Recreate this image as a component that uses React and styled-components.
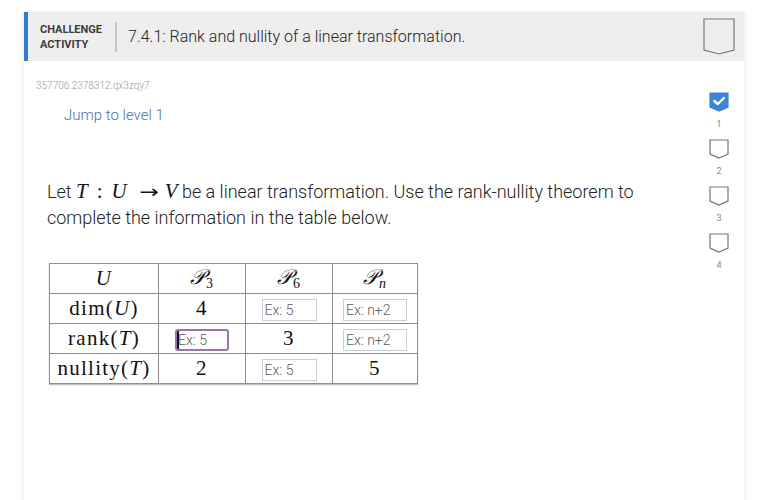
import React from 'react';
import styled, { createGlobalStyle } from 'styled-components';

const GlobalStyle = createGlobalStyle`
  body {
    margin: 0;
    background: #ffffff;
    font-family: Roboto, "Liberation Sans", sans-serif;
    color: #333333;
  }
`;

const Page = styled.div`
  padding: 12px 30px 0 24px;
`;

const Card = styled.section`
  width: 720px;
  min-height: 500px;
  background: #ffffff;
  box-shadow: 0 1px 4px rgba(0, 0, 0, 0.14);
`;

const Header = styled.header`
  display: flex;
  align-items: center;
  height: 49px;
  background: #eeeeee;
  border-left: 4px solid #2f80c9;
  padding: 0 9px 0 12px;
`;

const Kicker = styled.div`
  width: 75px;
  font-size: 11px;
  font-weight: 700;
  line-height: 15px;
  color: #3d3d3d;
  text-transform: uppercase;
`;

const Divider = styled.div`
  width: 2px;
  height: 30px;
  background: #c4c4c4;
  margin-right: 11px;
`;

const Title = styled.h1`
  flex: 1;
  margin: 0;
  font-size: 16px;
  font-weight: 300;
  color: #222222;
`;

const Body = styled.div`
  display: flex;
`;

const Main = styled.div`
  flex: 1;
  padding: 19px 0 0 12px;
  font-weight: 300;
`;

const ActivityId = styled.div`
  font-size: 10px;
  line-height: 12px;
  color: #9a9a9a;
`;

const JumpLink = styled.a`
  display: block;
  margin: 14px 0 0 28px;
  font-size: 15px;
  line-height: 18px;
  color: #3f72b5;
  text-decoration: none;
`;

const Prompt = styled.p`
  margin: 54px 0 0 11px;
  font-size: 18px;
  line-height: 26px;
  color: #222222;
  max-width: 596px;
`;

const Math = styled.span`
  display: inline-block;
  font-family: "Liberation Serif", "DejaVu Serif", serif;
  font-size: 21px;
  font-style: ${(p) => (p.italic ? 'italic' : 'normal')};
  font-weight: 400;
  margin: 0 ${(p) => p.gap || 0}px;
  color: #111111;
`;

const Arrow = styled.span`
  display: inline-block;
  width: 24px;
  text-align: center;
  font-family: "DejaVu Sans", sans-serif;
  font-size: 18px;
  font-weight: 400;
  margin: 0 4px 0 10px;
  transform: scaleX(1.3);
  color: #111111;
`;

const Table = styled.table`
  margin: 32px 0 0 13px;
  border-collapse: collapse;
  box-shadow: 0 1px 1px rgba(0, 0, 0, 0.25);
`;

const Cell = styled.td`
  width: ${(p) => p.w}px;
  height: 29px;
  padding: 0;
  border: 1px solid #8e8e8e;
  text-align: center;
  vertical-align: middle;
  font-family: "Liberation Serif", "DejaVu Serif", serif;
  font-size: 21px;
  font-weight: 400;
  letter-spacing: 0.06em;
  color: #111111;
`;

const Sub = styled.sub`
  font-size: 14px;
  vertical-align: -4px;
  font-style: ${(p) => (p.italic ? 'italic' : 'normal')};
`;

const Answer = styled.input`
  box-sizing: border-box;
  width: ${(p) => p.w}px;
  height: 22px;
  padding: 0 0 0 2px;
  border: 1px solid #c9d0d5;
  border-radius: 0;
  outline: none;
  font-family: Roboto, "Liberation Sans", sans-serif;
  font-size: 14px;
  font-weight: 300;
  letter-spacing: 0;
  vertical-align: middle;
  &::placeholder {
    color: #5f5f5f;
  }
`;

const ActiveAnswer = styled(Answer)`
  border: 2px solid #9d72aa;
  border-radius: 3px;
  padding-left: 1px;
  box-shadow: inset 2px 0 0 #111111;
`;

const Rail = styled.aside`
  width: 50px;
  display: flex;
  flex-direction: column;
  align-items: center;
  padding-top: 31px;
  gap: 6px;
`;

const Level = styled.div`
  display: flex;
  flex-direction: column;
  align-items: center;
  gap: 7px;
  height: 41px;
`;

const LevelNum = styled.span`
  font-size: 9px;
  line-height: 10px;
  color: #888888;
`;

const Shield = ({ w, h, checked }) => (
  <svg width={w} height={h} viewBox={`0 0 ${w} ${h}`}>
    <path
      d={`M1 1 H${w - 1} V${h - 5} L${w / 2} ${h - 1} L1 ${h - 5} Z`}
      fill={checked ? '#3a86d2' : 'none'}
      stroke={checked ? '#3a86d2' : '#767676'}
      strokeWidth="1.2"
    />
    {checked && (
      <path
        d={`M${w * 0.27} ${h * 0.45} L${w * 0.44} ${h * 0.6} L${w * 0.75} ${h * 0.3}`}
        fill="none"
        stroke="#ffffff"
        strokeWidth="2.4"
        strokeLinecap="round"
        strokeLinejoin="round"
      />
    )}
  </svg>
);

const P = ({ sub, italic }) => (
  <span>
    <i>𝒫</i>
    <Sub italic={italic}>{sub}</Sub>
  </span>
);

const rows = [
  ['dim', 'U', '4', { w: 55 }, { w: 64 }],
  ['rank', 'T', { w: 54, active: true }, '3', { w: 64 }],
  ['nullity', 'T', '2', { w: 55 }, '5'],
];

const widths = [108, 86, 86, 84];

const renderValue = (v) => {
  if (typeof v === 'string') return v;
  const ph = v.w === 64 ? 'Ex: n+2' : 'Ex: 5';
  return v.active ? <ActiveAnswer w={v.w} placeholder={ph} /> : <Answer w={v.w} placeholder={ph} />;
};

export default function App() {
  return (
    <Page>
      <GlobalStyle />
      <Card>
        <Header>
          <Kicker>Challenge<br />Activity</Kicker>
          <Divider />
          <Title>7.4.1: Rank and nullity of a linear transformation.</Title>
          <Shield w={32} h={37} />
        </Header>
        <Body>
          <Main>
            <ActivityId>357706.2378312.qx3zqy7</ActivityId>
            <JumpLink href="#">Jump to level 1</JumpLink>
            <Prompt>
              Let <Math italic>T</Math>
              <Math gap={9}>:</Math>
              <Math italic>U</Math>
              <Arrow>→</Arrow>
              <Math italic>V</Math> be a linear transformation. Use the rank-nullity theorem to
              complete the information in the table below.
            </Prompt>
            <Table>
              <tbody>
                <tr>
                  <Cell w={widths[0]}><i>U</i></Cell>
                  <Cell w={widths[1]}><P sub="3" /></Cell>
                  <Cell w={widths[2]}><P sub="6" /></Cell>
                  <Cell w={widths[3]}><P sub="n" italic /></Cell>
                </tr>
                {rows.map((r) => (
                  <tr key={r[0]}>
                    <Cell w={widths[0]}>
                      {r[0]}(<i>{r[1]}</i>)
                    </Cell>
                    {r.slice(2).map((v, i) => (
                      <Cell key={i} w={widths[i + 1]}>{renderValue(v)}</Cell>
                    ))}
                  </tr>
                ))}
              </tbody>
            </Table>
          </Main>
          <Rail>
            {[1, 2, 3, 4].map((n) => (
              <Level key={n}>
                <Shield w={20} h={20} checked={n === 1} />
                <LevelNum>{n}</LevelNum>
              </Level>
            ))}
          </Rail>
        </Body>
      </Card>
    </Page>
  );
}
